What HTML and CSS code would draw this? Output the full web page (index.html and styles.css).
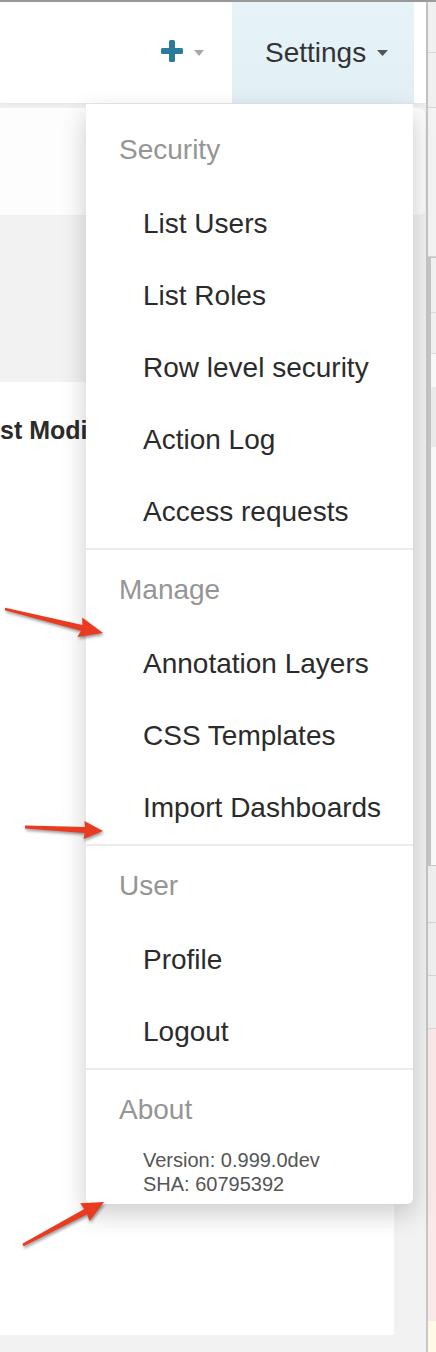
FILE: index.html
```html
<!DOCTYPE html>
<html>
<head>
<meta charset="utf-8">
<title>Settings menu</title>
<link rel="stylesheet" href="styles.css">
</head>
<body>
<div class="screen">
  <div class="main">
    <header class="navbar">
      <div class="nav-add">
        <svg class="plus" width="22" height="22" viewBox="0 0 22 22"><rect x="8" y="0" width="6" height="22" rx="1.5"/><rect x="0" y="8" width="22" height="6" rx="1.5"/></svg>
        <svg class="caret caret-light" width="10" height="6" viewBox="0 0 10 6"><polygon points="0,0 10,0 5,6"/></svg>
      </div>
      <div class="nav-settings">
        <span class="nav-label">Settings</span>
        <svg class="caret caret-dark" width="11" height="6" viewBox="0 0 11 6"><polygon points="0,0 11,0 5.5,6"/></svg>
      </div>
      <div class="nav-tail"></div>
    </header>
    <div class="content">
      <div class="card-top"></div>
      <div class="gray-band"></div>
      <div class="panel">
        <div class="col-title">st Modified</div>
      </div>
    </div>
  </div>
  <aside class="side">
    <div class="side-row r1"></div>
    <div class="side-row r2"></div>
    <div class="side-row r3"></div>
    <div class="side-box">
      <div class="sb-row s1"></div>
      <div class="sb-row s2"></div>
      <div class="sb-gap g1"></div>
      <div class="sb-gray"></div>
      <div class="sb-gap g2"></div>
    </div>
    <div class="side-row r4"></div>
    <div class="side-row r5"></div>
    <div class="side-row r6"></div>
    <div class="side-pink"></div>
    <div class="side-cream"></div>
  </aside>
</div>

<nav class="dropdown">
  <div class="dd-header">Security</div>
  <div class="dd-item">List Users</div>
  <div class="dd-item">List Roles</div>
  <div class="dd-item">Row level security</div>
  <div class="dd-item">Action Log</div>
  <div class="dd-item">Access requests</div>
  <div class="dd-divider"></div>
  <div class="dd-header">Manage</div>
  <div class="dd-item">Annotation Layers</div>
  <div class="dd-item">CSS Templates</div>
  <div class="dd-item">Import Dashboards</div>
  <div class="dd-divider"></div>
  <div class="dd-header">User</div>
  <div class="dd-item">Profile</div>
  <div class="dd-item">Logout</div>
  <div class="dd-divider"></div>
  <div class="dd-header">About</div>
  <div class="dd-version">Version: 0.999.0dev<br>SHA: 60795392</div>
</nav>

<svg class="arrows" width="436" height="1352" viewBox="0 0 436 1352">
  <g transform="translate(5 609) rotate(13.76)">
    <path d="M0,-1.2 L79,-3 L77,-10 L100.9,0 L77,10 L79,3 L0,1.2 Z"/>
  </g>
  <g transform="translate(25 827) rotate(2.94)">
    <path d="M0,-1.5 L60,-3 L59,-9 L78.1,0 L59,9 L60,3 L0,1.5 Z"/>
  </g>
  <g transform="translate(23 1245) rotate(-27.96)">
    <path d="M0,-1.5 L71,-3 L70,-10 L91.7,0 L70,10 L71,3 L0,1.5 Z"/>
  </g>
</svg>
</body>
</html>
```

FILE: styles.css
```css
html, body {
  margin: 0;
  padding: 0;
}

body {
  width: 436px;
  height: 1352px;
  overflow: hidden;
  position: relative;
  background: #f2f2f2;
  font-family: "Liberation Sans", Arial, Helvetica, sans-serif;
}

.screen {
  display: flex;
  height: 1350px;
  border-top: 2px solid #9b9b9b;
}

.main {
  width: 426px;
  display: flex;
  flex-direction: column;
}

/* ---------- navbar ---------- */
.navbar {
  height: 101px;
  display: flex;
  justify-content: flex-end;
  align-items: stretch;
  background: #ffffff;
  position: relative;
  z-index: 1;
  box-shadow: 0 1px 5px rgba(0, 0, 0, 0.07);
}

.nav-add {
  display: flex;
  align-items: center;
  gap: 11px;
  padding-right: 28px;
}

.plus {
  fill: #2b7b9a;
  margin-top: -3px;
}

.caret-light {
  fill: #a8a8a8;
}

.caret-dark {
  fill: #555555;
}

.nav-settings {
  width: 182px;
  box-sizing: border-box;
  padding-left: 33px;
  display: flex;
  align-items: center;
  gap: 11px;
  background: linear-gradient(#e6f4f9, #e2eff4);
}

.nav-label {
  font-size: 28px;
  color: #333333;
}

.nav-tail {
  width: 12px;
  background: #ffffff;
}

/* ---------- page content ---------- */
.content {
  flex: 1;
  display: flex;
  flex-direction: column;
  padding-top: 5px;
  background: #f2f2f2;
}

.card-top {
  width: 425px;
  height: 107px;
  background: #fdfdfd;
  border-radius: 0 6px 6px 0;
}

.gray-band {
  height: 167px;
  background: #f2f2f2;
}

.panel {
  width: 394px;
  height: 953px;
  background: #ffffff;
  box-sizing: border-box;
  padding-top: 34px;
  overflow: hidden;
}

.col-title {
  font-size: 25px;
  line-height: 28px;
  font-weight: bold;
  color: #2b2b2b;
  white-space: nowrap;
}

/* ---------- right edge strip ---------- */
.side {
  width: 8px;
  border-left: 2px solid #c6c6c6;
  background: #f0f0f0;
  display: flex;
  flex-direction: column;
}

.side-row {
  border-bottom: 1px solid #d6d6d6;
  background: #f0f0f0;
}

.r1 { height: 50px; }
.r2 { height: 54px; }
.r3 { height: 148px; background: #f4f4f4; }

.side-box {
  height: 607px;
  border-left: 3px solid #c6c6c6;
  border-top: 1px solid #c6c6c6;
  display: flex;
  flex-direction: column;
  background: #fafafa;
}

.sb-row {
  border-bottom: 1px solid #dcdcdc;
  background: #f2f2f2;
}

.s1 { height: 54px; }
.s2 { height: 40px; }
.g1 { height: 33px; }
.sb-gray { height: 60px; background: #ececec; }
.g2 { flex: 1; }

.r4 { height: 56px; border-top: 1px solid #c6c6c6; }
.r5 { height: 52px; }
.r6 { height: 52px; }

.side-pink {
  height: 292px;
  background: #fbe9e9;
}

.side-cream {
  flex: 1;
  background: #fff9e6;
}

/* ---------- dropdown menu ---------- */
.dropdown {
  position: absolute;
  left: 86px;
  top: 104px;
  width: 327px;
  padding-top: 6px;
  background: #ffffff;
  border-radius: 0 0 6px 6px;
  box-shadow: 0 10px 26px rgba(0, 0, 0, 0.2);
  z-index: 2;
}

.dd-header {
  padding: 20px 0 18px 33px;
  font-size: 28px;
  line-height: 40px;
  color: #959595;
}

.dd-item {
  padding-left: 57px;
  font-size: 28px;
  line-height: 72px;
  color: #2b2b2b;
  white-space: nowrap;
}

.dd-divider {
  height: 2px;
  background: #ebebeb;
}

.dd-version {
  padding: 0 0 8px 57px;
  font-size: 20px;
  line-height: 24px;
  color: #555555;
}

/* ---------- annotation arrows ---------- */
.arrows {
  position: absolute;
  left: 0;
  top: 0;
  z-index: 3;
  pointer-events: none;
  fill: #ea3a1f;
  filter: drop-shadow(1px 2px 1.5px rgba(0, 0, 0, 0.4));
}
```
